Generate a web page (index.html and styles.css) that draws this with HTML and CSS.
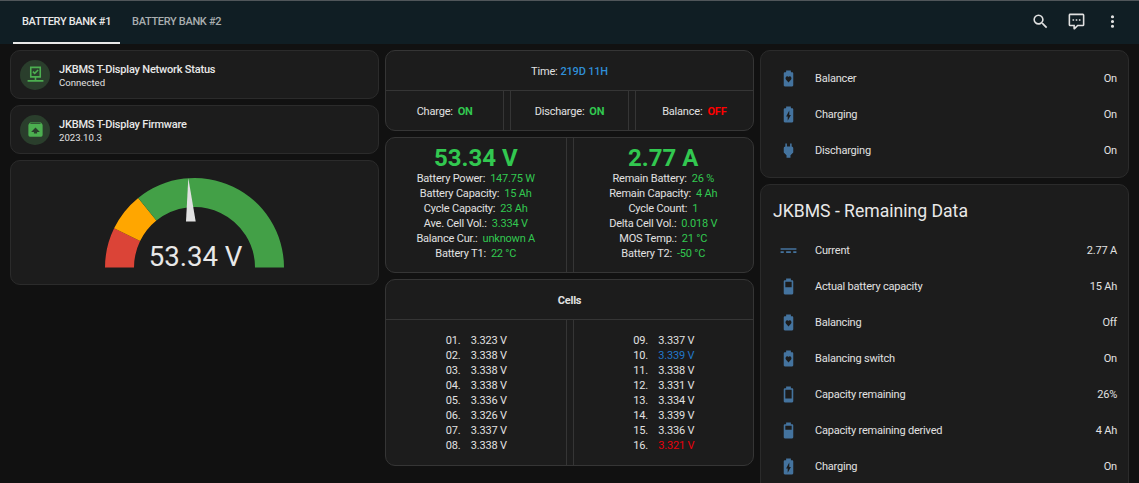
FILE: index.html
```html
<!DOCTYPE html>
<html lang="en">
<head>
<meta charset="utf-8">
<title>JKBMS</title>
<link rel="stylesheet" href="styles.css">
</head>
<body>
<header class="topbar">
  <nav class="tabs">
    <div class="tab active">BATTERY BANK #1</div>
    <div class="tab">BATTERY BANK #2</div>
  </nav>
  <div class="actions">
    <svg class="action" viewBox="0 0 24 24"><path d="M9.5,3A6.5,6.5 0 0,1 16,9.5C16,11.11 15.41,12.59 14.44,13.73L14.71,14H15.5L20.5,19L19,20.5L14,15.5V14.71L13.73,14.44C12.59,15.41 11.11,16 9.5,16A6.5,6.5 0 0,1 3,9.5A6.5,6.5 0 0,1 9.5,3M9.5,5C7,5 5,7 5,9.5C5,12 7,14 9.5,14C12,14 14,12 14,9.5C14,7 12,5 9.5,5Z"/></svg>
    <svg class="action" viewBox="0 0 24 24"><path d="M9,22A1,1 0 0,1 8,21V18H4A2,2 0 0,1 2,16V4C2,2.89 2.9,2 4,2H20A2,2 0 0,1 22,4V16A2,2 0 0,1 20,18H13.9L10.2,21.71C10,21.9 9.75,22 9.5,22V22H9M10,16V19.08L13.08,16H20V4H4V16H10M17,11H15V9H17V11M13,11H11V9H13V11M9,11H7V9H9V11Z"/></svg>
    <svg class="action" viewBox="0 0 24 24"><path d="M12,16A2,2 0 0,1 14,18A2,2 0 0,1 12,20A2,2 0 0,1 10,18A2,2 0 0,1 12,16M12,10A2,2 0 0,1 14,12A2,2 0 0,1 12,14A2,2 0 0,1 10,12A2,2 0 0,1 12,10M12,4A2,2 0 0,1 14,6A2,2 0 0,1 12,8A2,2 0 0,1 10,6A2,2 0 0,1 12,4Z"/></svg>
  </div>
</header>

<main class="columns">
  <section class="col">
    <div class="card tile">
      <div class="badge">
        <svg viewBox="0 0 24 24"><path fill-rule="evenodd" d="M5,2H19V16H13V19H22V21H2V19H11V16H5ZM7,4V14H17V4ZM11,12L8,9L9.4,7.6L11,9.2L14.6,5.6L16,7Z"/></svg>
      </div>
      <div class="tile-text">
        <div class="tile-name">JKBMS T-Display Network Status</div>
        <div class="tile-state">Connected</div>
      </div>
    </div>
    <div class="card tile">
      <div class="badge">
        <svg viewBox="0 0 24 24"><path d="M20.54,5.23C20.83,5.57 21,6 21,6.5V19A2,2 0 0,1 19,21H5A2,2 0 0,1 3,19V6.5C3,6 3.17,5.57 3.46,5.23L4.84,3.55C5.12,3.21 5.53,3 6,3H18C18.47,3 18.88,3.21 19.15,3.55L20.54,5.23M5.12,5H18.87L17.93,4H5.93L5.12,5M12,9.5L6.5,15H10V17H14V15H17.5L12,9.5Z"/></svg>
      </div>
      <div class="tile-text">
        <div class="tile-name">JKBMS T-Display Firmware</div>
        <div class="tile-state">2023.10.3</div>
      </div>
    </div>
    <div class="card gauge-card">
      <svg class="gauge" viewBox="-89.5 -89.5 179 89.5">
        <path class="seg-red" d="M-89.5 0A89.5 89.5 0 0 1 -80.4 -39.2L-54.4 -26.5A60.5 60.5 0 0 0 -60.5 0Z"/>
        <path class="seg-orange" d="M-80.4 -39.2A89.5 89.5 0 0 1 -56.3 -69.6L-38.1 -47A60.5 60.5 0 0 0 -54.4 -26.5Z"/>
        <path class="seg-green" d="M-56.3 -69.6A89.5 89.5 0 0 1 89.5 0L60.5 0A60.5 60.5 0 0 0 -38.1 -47Z"/>
        <path class="needle" d="M-6.2 -89.5L1.2 -46L-8.5 -46Z"/>
        <text class="gauge-value" x="1" y="-2" text-anchor="middle">53.34 V</text>
      </svg>
    </div>
  </section>

  <section class="col">
    <div class="card panel">
      <div class="panel-head">Time:<span class="blue time-value">219D 11H</span></div>
      <div class="trio">
        <div class="cell short">Charge:<b class="green">ON</b></div>
        <div class="cell short">Discharge:<b class="green">ON</b></div>
        <div class="cell short">Balance:<b class="red">OFF</b></div>
      </div>
    </div>

    <div class="card panel">
      <div class="duo">
        <div class="cell stats">
          <div class="big green">53.34 V</div>
          <div class="stat">Battery Power:<span class="green">147.75 W</span></div>
          <div class="stat">Battery Capacity:<span class="green">15 Ah</span></div>
          <div class="stat">Cycle Capacity:<span class="green">23 Ah</span></div>
          <div class="stat">Ave. Cell Vol.:<span class="green">3.334 V</span></div>
          <div class="stat">Balance Cur.:<span class="green">unknown A</span></div>
          <div class="stat">Battery T1:<span class="green">22 °C</span></div>
        </div>
        <div class="cell stats">
          <div class="big green">2.77 A</div>
          <div class="stat">Remain Battery:<span class="green">26 %</span></div>
          <div class="stat">Remain Capacity:<span class="green">4 Ah</span></div>
          <div class="stat">Cycle Count:<span class="green">1</span></div>
          <div class="stat">Delta Cell Vol.:<span class="green">0.018 V</span></div>
          <div class="stat">MOS Temp.:<span class="green">21 °C</span></div>
          <div class="stat">Battery T2:<span class="green">-50 °C</span></div>
        </div>
      </div>
    </div>

    <div class="card panel">
      <div class="panel-head cells-head">Cells</div>
      <div class="duo">
        <div class="cell cells">
          <div class="cell-list">
            <span>01.</span><span>3.323 V</span>
            <span>02.</span><span>3.338 V</span>
            <span>03.</span><span>3.338 V</span>
            <span>04.</span><span>3.338 V</span>
            <span>05.</span><span>3.336 V</span>
            <span>06.</span><span>3.326 V</span>
            <span>07.</span><span>3.337 V</span>
            <span>08.</span><span>3.338 V</span>
          </div>
        </div>
        <div class="cell cells">
          <div class="cell-list">
            <span>09.</span><span>3.337 V</span>
            <span>10.</span><span class="cell-high">3.339 V</span>
            <span>11.</span><span>3.338 V</span>
            <span>12.</span><span>3.331 V</span>
            <span>13.</span><span>3.334 V</span>
            <span>14.</span><span>3.339 V</span>
            <span>15.</span><span>3.336 V</span>
            <span>16.</span><span class="cell-low">3.321 V</span>
          </div>
        </div>
      </div>
    </div>
  </section>

  <section class="col">
    <div class="card entities">
      <div class="row">
        <svg class="ico" viewBox="0 0 24 24"><path fill-rule="evenodd" d="M16.67,4H15V2H9V4H7.33A1.33,1.33 0 0,0 6,5.33V20.67C6,21.4 6.6,22 7.33,22H16.67A1.33,1.33 0 0,0 18,20.67V5.33C18,4.6 17.4,4 16.67,4ZM12,17L8.7,13.2C7.6,11.6 8.5,9 10.5,9C11.2,9 11.7,9.4 12,10C12.3,9.4 12.8,9 13.5,9C15.5,9 16.4,11.6 15.3,13.2Z"/></svg>
        <span class="row-name">Balancer</span><span class="row-value">On</span>
      </div>
      <div class="row">
        <svg class="ico" viewBox="0 0 24 24"><path fill-rule="evenodd" d="M16.67,4H15V2H9V4H7.33A1.33,1.33 0 0,0 6,5.33V20.67C6,21.4 6.6,22 7.33,22H16.67A1.33,1.33 0 0,0 18,20.67V5.33C18,4.6 17.4,4 16.67,4ZM11,20V14.5H9L13,7V12.5H15L11,20Z"/></svg>
        <span class="row-name">Charging</span><span class="row-value">On</span>
      </div>
      <div class="row">
        <svg class="ico" viewBox="0 0 24 24"><path d="M16,7V3H14V7H10V3H8V7C7,7 6,8 6,9V14.5L9.5,18V21H14.5V18L18,14.5V9C18,8 17,7 16,7Z"/></svg>
        <span class="row-name">Discharging</span><span class="row-value">On</span>
      </div>
    </div>

    <div class="card entities remaining">
      <h2 class="card-title">JKBMS - Remaining Data</h2>
      <div class="row">
        <svg class="ico" viewBox="0 0 24 24"><path d="M2,9H22V11H2V9M2,13H6V15H2V13M9,13H15V15H9V13M18,13H22V15H18V13Z"/></svg>
        <span class="row-name">Current</span><span class="row-value">2.77 A</span>
      </div>
      <div class="row">
        <svg class="ico" viewBox="0 0 24 24"><path fill-rule="evenodd" d="M16.67,4H15V2H9V4H7.33A1.33,1.33 0 0,0 6,5.33V20.67C6,21.4 6.6,22 7.33,22H16.67A1.33,1.33 0 0,0 18,20.67V5.33C18,4.6 17.4,4 16.67,4ZM16,6H8V13H16Z"/></svg>
        <span class="row-name">Actual battery capacity</span><span class="row-value">15 Ah</span>
      </div>
      <div class="row">
        <svg class="ico" viewBox="0 0 24 24"><path fill-rule="evenodd" d="M16.67,4H15V2H9V4H7.33A1.33,1.33 0 0,0 6,5.33V20.67C6,21.4 6.6,22 7.33,22H16.67A1.33,1.33 0 0,0 18,20.67V5.33C18,4.6 17.4,4 16.67,4ZM12,17L8.7,13.2C7.6,11.6 8.5,9 10.5,9C11.2,9 11.7,9.4 12,10C12.3,9.4 12.8,9 13.5,9C15.5,9 16.4,11.6 15.3,13.2Z"/></svg>
        <span class="row-name">Balancing</span><span class="row-value">Off</span>
      </div>
      <div class="row">
        <svg class="ico" viewBox="0 0 24 24"><path fill-rule="evenodd" d="M16.67,4H15V2H9V4H7.33A1.33,1.33 0 0,0 6,5.33V20.67C6,21.4 6.6,22 7.33,22H16.67A1.33,1.33 0 0,0 18,20.67V5.33C18,4.6 17.4,4 16.67,4ZM12,17L8.7,13.2C7.6,11.6 8.5,9 10.5,9C11.2,9 11.7,9.4 12,10C12.3,9.4 12.8,9 13.5,9C15.5,9 16.4,11.6 15.3,13.2Z"/></svg>
        <span class="row-name">Balancing switch</span><span class="row-value">On</span>
      </div>
      <div class="row">
        <svg class="ico" viewBox="0 0 24 24"><path fill-rule="evenodd" d="M16.67,4H15V2H9V4H7.33A1.33,1.33 0 0,0 6,5.33V20.67C6,21.4 6.6,22 7.33,22H16.67A1.33,1.33 0 0,0 18,20.67V5.33C18,4.6 17.4,4 16.67,4ZM16,6H8V17H16Z"/></svg>
        <span class="row-name">Capacity remaining</span><span class="row-value">26%</span>
      </div>
      <div class="row">
        <svg class="ico" viewBox="0 0 24 24"><path fill-rule="evenodd" d="M16.67,4H15V2H9V4H7.33A1.33,1.33 0 0,0 6,5.33V20.67C6,21.4 6.6,22 7.33,22H16.67A1.33,1.33 0 0,0 18,20.67V5.33C18,4.6 17.4,4 16.67,4ZM16,6H8V11H16Z"/></svg>
        <span class="row-name">Capacity remaining derived</span><span class="row-value">4 Ah</span>
      </div>
      <div class="row">
        <svg class="ico" viewBox="0 0 24 24"><path fill-rule="evenodd" d="M16.67,4H15V2H9V4H7.33A1.33,1.33 0 0,0 6,5.33V20.67C6,21.4 6.6,22 7.33,22H16.67A1.33,1.33 0 0,0 18,20.67V5.33C18,4.6 17.4,4 16.67,4ZM11,20V14.5H9L13,7V12.5H15L11,20Z"/></svg>
        <span class="row-name">Charging</span><span class="row-value">On</span>
      </div>
    </div>
  </section>
</main>
</body>
</html>
```
FILE: styles.css
```css
* { box-sizing: border-box; }

html, body {
  margin: 0;
  height: 483px;
  overflow: hidden;
}

body {
  background: #111111;
  color: #e1e1e1;
  font-family: Roboto, "Liberation Sans", sans-serif;
  font-size: 11px;
  letter-spacing: -0.2px;
  line-height: 15px;
}

.topbar {
  height: 44px;
  background: #101e24;
  border-top: 1px solid #50565a;
  display: flex;
  align-items: stretch;
  justify-content: space-between;
  padding: 0 17px 0 13px;
}

.tabs { display: flex; gap: 3px; }

.tab {
  padding: 0 9px;
  display: flex;
  align-items: center;
  font-size: 11px;
  font-weight: 500;
  letter-spacing: -0.33px;
  color: #a9aeb0;
  border-bottom: 2px solid transparent;
}

.tab.active {
  color: #e8e8e8;
  border-bottom-color: #e8e8e8;
}

.actions {
  display: flex;
  align-items: center;
  gap: 17px;
  padding-bottom: 2px;
}

.action {
  width: 19px;
  height: 19px;
  fill: #e1e1e1;
}

.columns {
  display: grid;
  grid-template-columns: repeat(3, 369px);
  column-gap: 6px;
  padding: 6px 10px 0;
  align-items: start;
}

.col {
  display: flex;
  flex-direction: column;
  gap: 6px;
  min-width: 0;
}

.card {
  background: #1c1c1c;
  border: 1px solid #2b2b2b;
  border-radius: 10px;
  overflow: hidden;
}

.tile {
  height: 49px;
  display: flex;
  align-items: center;
  padding: 0 9px;
  gap: 9px;
}

.badge {
  width: 30px;
  height: 30px;
  border-radius: 50%;
  background: #2a3e2c;
  display: flex;
  align-items: center;
  justify-content: center;
  flex: none;
}

.badge svg {
  width: 19px;
  height: 19px;
  fill: #4caf50;
}

.tile-text { padding-top: 1px; }

.tile-name {
  font-weight: 500;
  line-height: 15px;
  color: #e8e8e8;
}

.tile-state {
  font-size: 9.6px;
  line-height: 11px;
  letter-spacing: 0;
  color: #e1e1e1;
}

.gauge-card {
  height: 125px;
  display: flex;
  justify-content: center;
  padding-top: 17px;
}

.gauge {
  width: 179px;
  height: 89.5px;
  overflow: visible;
}

.seg-red { fill: #db4437; }
.seg-orange { fill: #ffa600; }
.seg-green { fill: #43a047; }
.needle { fill: #e1e1e1; }

.gauge-value {
  font-size: 27.6px;
  letter-spacing: 0;
  fill: #e8e8e8;
}

.panel {
  border-color: #353535;
}

.panel-head {
  height: 40px;
  padding-top: 2px;
  display: flex;
  align-items: center;
  justify-content: center;
  border-bottom: 1px solid #353535;
}

.time-value { margin-left: 3px; font-weight: 500; }

.cells-head {
  font-weight: 700;
}

.trio {
  display: grid;
  grid-template-columns: 1fr 1fr 1fr;
  column-gap: 6px;
}

.duo {
  display: grid;
  grid-template-columns: 1fr 1fr;
  column-gap: 6px;
}

.cell {
  border-right: 1px solid #353535;
  border-left: 1px solid #353535;
}

.trio .cell:first-child,
.duo .cell:first-child { border-left: 0; }

.trio .cell:last-child,
.duo .cell:last-child { border-right: 0; }

.short {
  height: 39px;
  padding-top: 1px;
  display: flex;
  align-items: center;
  justify-content: center;
}

.short b {
  margin-left: 5px;
  font-weight: 700;
}

.stats {
  height: 134px;
  padding: 7px 0 0;
  text-align: center;
}

.big {
  font-size: 24px;
  font-weight: 700;
  letter-spacing: 0;
  line-height: 26px;
}

.stat span { margin-left: 5px; }

.cells {
  display: flex;
  justify-content: center;
  padding: 13px 0 12px 1px;
}

.cell-list {
  display: grid;
  grid-template-columns: 25px auto;
  color: #e1e1e1;
}

.green { color: #32c850; }
.blue { color: #2f8fd8; }
.red { color: #ff0000; }
.cell-high { color: #2277c9; }
.cell-low { color: #e8000b; }

.entities {
  padding: 9px 11px 9px 12px;
}

.remaining {
  padding-top: 0;
  padding-bottom: 40px;
}

.card-title {
  margin: 0;
  height: 47px;
  padding-top: 15px;
  font-size: 17.6px;
  line-height: 22px;
  font-weight: 400;
  letter-spacing: 0;
  color: #e8e8e8;
}

.row {
  height: 36px;
  display: flex;
  align-items: center;
}

.ico {
  width: 19px;
  height: 19px;
  fill: #44739e;
  margin: 0 17px 0 6px;
  flex: none;
}

.row-name { flex: 1; }
.row-value { text-align: right; }
```
